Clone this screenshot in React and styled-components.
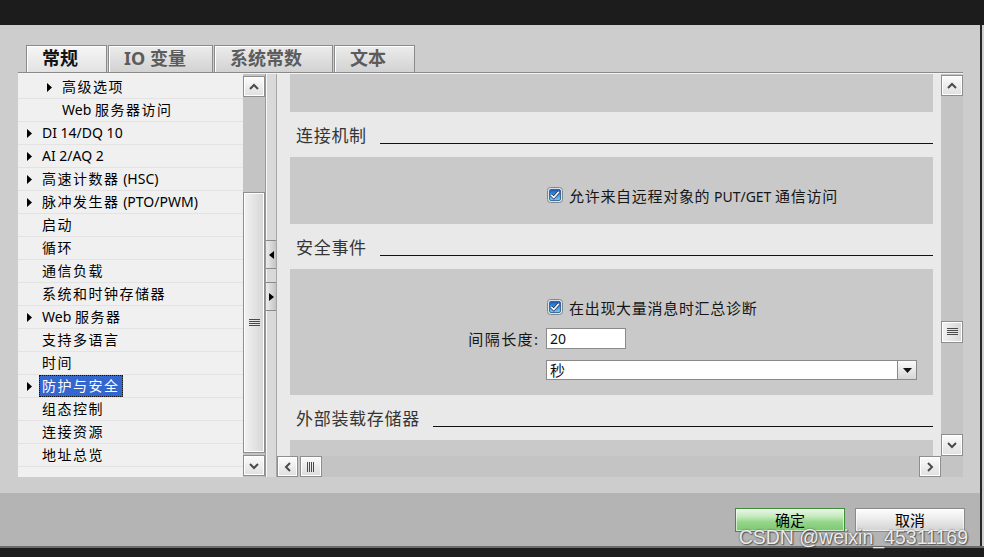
import React from "react";
import styled, { createGlobalStyle } from "styled-components";

const GlobalStyle = createGlobalStyle`
  html, body { margin: 0; padding: 0; background: #1c1c1c; }
  body { font-family: "Noto Sans", "Noto Sans CJK SC", sans-serif; }
  * { box-sizing: border-box; }
`;

const CJK_SPLIT = /([\u2E80-\u9FFF\uFF00-\uFFEF\u3000-\u303F]+)/;
const CJK_TEST = /[\u2E80-\u9FFF\uFF00-\uFFEF\u3000-\u303F]/;

const Lat = styled.span`
  letter-spacing: 0;
  font-size: var(--lat, 1em);
`;

function Txt({ children }) {
  const parts = String(children).split(CJK_SPLIT).filter(Boolean);
  return parts.map((p, i) =>
    CJK_TEST.test(p) ? <React.Fragment key={i}>{p}</React.Fragment> : <Lat key={i}>{p}</Lat>
  );
}

/* ---------- page frame ---------- */
const Page = styled.div`
  width: 984px;
  height: 557px;
  display: grid;
  grid-template-columns: 980px 2px 2px;
  grid-template-rows: 25px 521px 11px;
  overflow: hidden;
`;
const TopBar = styled.div`
  grid-column: 1 / -1;
  background: #1c1c1c;
`;
const Edge = styled.div`
  background: ${(p) => (p.$light ? "#cfcfcf" : "#262626")};
`;
const BottomBar = styled.div`
  grid-column: 1 / -1;
  background: #1c1c1c;
  border-top: 2px solid #6a6a6a;
`;
const Window = styled.div`
  background: #cdcdcd;
  display: flex;
  flex-direction: column;
`;
const Inspector = styled.div`
  padding: 20px 17px 0 18px;
  display: flex;
  flex-direction: column;
`;

/* ---------- tabs ---------- */
const TabStrip = styled.div`
  display: flex;
  height: 28px;
  padding-left: 8px;
  border-bottom: 1px solid #8a8a8a;
`;
const Tab = styled.div`
  width: ${(p) => p.$w}px;
  height: 27px;
  margin-right: 1px;
  padding-left: 15px;
  border: 1px solid #8a8a8a;
  border-bottom: none;
  background: ${(p) =>
    p.$active
      ? "linear-gradient(#f6f6f6, #e2e2e2)"
      : "linear-gradient(#ececec, #d2d2d2)"};
  box-shadow: inset 1px 1px 0 #ffffff;
  font-size: 18px;
  font-weight: 700;
  line-height: 25px;
  color: ${(p) => (p.$active ? "#141414" : "#5c5c5c")};
  white-space: nowrap;
`;

/* ---------- panels ---------- */
const Panels = styled.div`
  display: flex;
  height: 404px;
  border-top: 1px solid #f4f4f4;
`;
const TreeList = styled.div`
  width: 225px;
  background: #f0f0f0;
  padding-top: 2px;
  overflow: hidden;
`;
const Row = styled.div`
  height: 23px;
  border-bottom: 1px solid #e3e3e3;
  display: flex;
  align-items: center;
  padding-left: ${(p) => 9 + p.$level * 20}px;
`;
const ArrowSlot = styled.span`
  width: 15px;
  flex: none;
  display: flex;
  align-items: center;
`;
const RowLabel = styled.span`
  --lat: 14px;
  display: inline-block;
  height: 22px;
  font-size: 14px;
  line-height: 22px;
  letter-spacing: 1.5px;
  white-space: nowrap;
  color: ${(p) => (p.$sel ? "#ffffff" : "#000000")};
  background: ${(p) => (p.$sel ? "#3366cf" : "transparent")};
  outline: ${(p) => (p.$sel ? "1px dotted #101010" : "none")};
  outline-offset: -1px;
  margin-left: ${(p) => (p.$sel ? -3 : 0)}px;
  padding: 0 ${(p) => (p.$sel ? 3 : 0)}px;
`;

/* ---------- scrollbars ---------- */
const VScroll = styled.div`
  width: 22px;
  flex: none;
  background: #c4c4c4;
  display: flex;
  flex-direction: column;
  padding: ${(p) => p.$pt}px 0 ${(p) => p.$pb}px;
`;
const HScroll = styled.div`
  height: 21px;
  background: #c4c4c4;
  display: flex;
`;
const SBtn = styled.div`
  flex: none;
  width: ${(p) => p.$w || 22}px;
  height: ${(p) => p.$h || 21}px;
  border: 1px solid #8e8e8e;
  background: linear-gradient(#fbfbfb, #e0e0e0);
  box-shadow: inset 0 0 0 1px #ffffff;
  display: flex;
  align-items: center;
  justify-content: center;
`;
const Track = styled.div`
  flex: 1;
  display: flex;
  flex-direction: ${(p) => (p.$h ? "row" : "column")};
`;
const Thumb = styled.div`
  flex: none;
  ${(p) =>
    p.$h
      ? `margin-left:${p.$off}px; width:${p.$len}px; height:21px;
         background: linear-gradient(#fafafa, #dcdcdc);`
      : `margin-top:${p.$off}px; height:${p.$len}px; width:22px;
         background: linear-gradient(to right, #f2f2f2, #d6d6d6);`}
  border: 1px solid #8e8e8e;
  box-shadow: inset 0 0 0 1px #ffffff;
  display: flex;
  align-items: center;
  justify-content: center;
`;

/* ---------- splitter ---------- */
const Splitter = styled.div`
  width: 12px;
  flex: none;
  background: #d9d9d9;
  border-left: 1px solid #9a9a9a;
  border-right: 1px solid #a6a6a6;
  box-shadow: inset 1px 0 0 #f7f7f7;
  display: flex;
  flex-direction: column;
  gap: 13px;
  padding-top: 166px;
`;
const SplitBtn = styled.div`
  height: 29px;
  border-top: 1px solid #8a8a8a;
  border-bottom: 1px solid #8a8a8a;
  background: linear-gradient(to right, #ececec, #c4c4c4);
  display: flex;
  align-items: center;
  justify-content: center;
`;

/* ---------- right area ---------- */
const RightArea = styled.div`
  width: 686px;
  display: grid;
  grid-template-columns: 664px 22px;
  grid-template-rows: 382px 21px;
`;
const Viewport = styled.div`
  background: #e9e9e9;
  overflow: hidden;
  padding: 0 8px 0 13px;
  display: flex;
  flex-direction: column;
`;
const GrayBlock = styled.div`
  flex: none;
  height: ${(p) => p.$h}px;
  background: #c9c9c9;
`;
const SectionHead = styled.div`
  flex: none;
  height: 45px;
  display: flex;
  align-items: flex-start;
  padding: 12px 0 0 6px;
`;
const HeadTitle = styled.span`
  font-size: 17px;
  letter-spacing: 0.7px;
  line-height: 24px;
  color: #353535;
  margin-right: 13px;
  white-space: nowrap;
`;
const HeadRule = styled.div`
  flex: 1;
  height: 20px;
  border-bottom: 1px solid #111111;
`;
const FormPanel = styled.div`
  flex: none;
  background: #c9c9c9;
  display: grid;
  grid-template-columns: 248px 1fr;
  column-gap: 8px;
  row-gap: 11px;
  align-items: center;
  padding: ${(p) => p.$pt}px 16px ${(p) => p.$pb}px 0;
`;
const CheckCell = styled.label`
  --lat: 14px;
  grid-column: 2;
  height: 20px;
  display: flex;
  align-items: center;
  gap: 6px;
  padding-left: 1px;
  font-size: 15px;
  letter-spacing: 0.7px;
  color: #161616;
  white-space: nowrap;
`;
const FieldLabel = styled.span`
  --lat: 15px;
  grid-column: 1;
  justify-self: end;
  font-size: 15px;
  letter-spacing: 1.4px;
  color: #161616;
`;
const TextInput = styled.div`
  grid-column: 2;
  width: 80px;
  height: 21px;
  background: #ffffff;
  border: 1px solid #8a8a8a;
  padding-left: 3px;
  font-size: 14px;
  line-height: 19px;
  color: #111;
`;
const Select = styled.div`
  grid-column: 2;
  width: 371px;
  height: 20px;
  background: #ffffff;
  border: 1px solid #8a8a8a;
  display: flex;
`;
const SelectText = styled.span`
  flex: 1;
  padding-left: 3px;
  font-size: 15px;
  line-height: 18px;
  color: #111;
`;
const SelectBtn = styled.span`
  width: 19px;
  border-left: 1px solid #8a8a8a;
  background: linear-gradient(#fafafa, #d6d6d6);
  display: flex;
  align-items: center;
  justify-content: center;
`;

/* ---------- buttons ---------- */
const Gap = styled.div`
  height: 16px;
  flex: none;
`;
const ButtonBar = styled.div`
  position: relative;
  flex: 1;
  background: #b4b4b4;
  display: flex;
  justify-content: flex-end;
  align-items: flex-start;
  gap: 10px;
  padding: 15px 15px 0 0;
`;
const DlgButton = styled.div`
  width: 110px;
  height: 24px;
  border: 1px solid ${(p) => (p.$primary ? "#3f8f3a" : "#8a8a8a")};
  background: ${(p) =>
    p.$primary
      ? "linear-gradient(#eaf7e6 0%, #c4e9bc 35%, #94d58a 60%, #7cc772 100%)"
      : "linear-gradient(#fdfdfd 0%, #ececec 45%, #d2d2d2 100%)"};
  box-shadow: inset 0 0 0 1px rgba(255, 255, 255, 0.6);
  font-size: 15px;
  line-height: 22px;
  text-align: center;
  color: #000;
`;
const Watermark = styled.div`
  position: absolute;
  right: 12px;
  bottom: -2px;
  font-family: "Liberation Sans", Arial, sans-serif;
  font-size: 19.5px;
  line-height: 22px;
  color: rgba(255, 255, 255, 0.88);
  text-shadow: 0 0 2px rgba(60, 60, 60, 0.8), 1px 1px 1px rgba(40, 40, 40, 0.6);
  white-space: nowrap;
  pointer-events: none;
`;

/* ---------- icons ---------- */
const Chevron = ({ dir }) => {
  const pts = {
    up: "1,7 5,3 9,7",
    down: "1,3 5,7 9,3",
    left: "7,1 3,5 7,9",
    right: "3,1 7,5 3,9",
  }[dir];
  return (
    <svg width="10" height="10" viewBox="0 0 10 10">
      <polyline points={pts} fill="none" stroke="#4a4a4a" strokeWidth="2" />
    </svg>
  );
};
const TreeArrow = () => (
  <svg width="5" height="9" viewBox="0 0 5 9">
    <polygon points="0,0 5,4.5 0,9" fill="#000" />
  </svg>
);
const SmallTri = ({ dir }) => (
  <svg width="5" height="8" viewBox="0 0 5 8">
    <polygon points={dir === "left" ? "5,0 0,4 5,8" : "0,0 5,4 0,8"} fill="#000" />
  </svg>
);
const DownTri = () => (
  <svg width="9" height="5" viewBox="0 0 9 5">
    <polygon points="0,0 9,0 4.5,5" fill="#111" />
  </svg>
);
const GripH = () => (
  <svg width="11" height="8" viewBox="0 0 11 8">
    {[0.5, 2.5, 4.5, 6.5].map((y) => (
      <line key={y} x1="0" x2="11" y1={y} y2={y} stroke="#4a4a4a" strokeWidth="1" />
    ))}
  </svg>
);
const GripV = () => (
  <svg width="8" height="10" viewBox="0 0 8 10">
    {[0.5, 2.5, 4.5, 6.5].map((x) => (
      <line key={x} y1="0" y2="10" x1={x} x2={x} stroke="#4a4a4a" strokeWidth="1" />
    ))}
  </svg>
);
const CheckBox = () => (
  <svg width="16" height="16" viewBox="0 0 16 16" style={{ flex: "none" }}>
    <defs>
      <linearGradient id="cbfill" x1="0" y1="0" x2="0" y2="1">
        <stop offset="0" stopColor="#1d57b8" />
        <stop offset="1" stopColor="#6fd3f5" />
      </linearGradient>
    </defs>
    <rect x="0.5" y="0.5" width="15" height="15" rx="3" fill="#dfe3e8" stroke="#7b8794" />
    <rect x="2.5" y="2.5" width="11" height="11" rx="1.5" fill="url(#cbfill)" stroke="#2f4f7f" strokeWidth="0.8" />
    <polyline points="4.2,8 6.8,10.6 11.8,4.8" fill="none" stroke="#1a2c5a" strokeWidth="3" />
    <polyline points="4.2,8 6.8,10.6 11.8,4.8" fill="none" stroke="#ffffff" strokeWidth="1.7" />
  </svg>
);

/* ---------- data ---------- */
const tree = [
  { l: 1, a: true, t: "高级选项" },
  { l: 1, t: "Web 服务器访问" },
  { l: 0, a: true, t: "DI 14/DQ 10" },
  { l: 0, a: true, t: "AI 2/AQ 2" },
  { l: 0, a: true, t: "高速计数器 (HSC)" },
  { l: 0, a: true, t: "脉冲发生器 (PTO/PWM)" },
  { l: 0, t: "启动" },
  { l: 0, t: "循环" },
  { l: 0, t: "通信负载" },
  { l: 0, t: "系统和时钟存储器" },
  { l: 0, a: true, t: "Web 服务器" },
  { l: 0, t: "支持多语言" },
  { l: 0, t: "时间" },
  { l: 0, a: true, s: true, t: "防护与安全" },
  { l: 0, t: "组态控制" },
  { l: 0, t: "连接资源" },
  { l: 0, t: "地址总览" },
];

const tabs = [
  { t: "常规", w: 81, active: true },
  { t: "IO 变量", w: 105 },
  { t: "系统常数", w: 119 },
  { t: "文本", w: 81 },
];

function Section({ title }) {
  return (
    <SectionHead>
      <HeadTitle>{title}</HeadTitle>
      <HeadRule />
    </SectionHead>
  );
}

export default function App() {
  return (
    <>
      <GlobalStyle />
      <Page>
        <TopBar />
        <Window>
          <Inspector>
            <TabStrip>
              {tabs.map((tb) => (
                <Tab key={tb.t} $w={tb.w} $active={tb.active}>
                  {tb.t}
                </Tab>
              ))}
            </TabStrip>
            <Panels>
              <TreeList>
                {tree.map((r) => (
                  <Row key={r.t} $level={r.l}>
                    <ArrowSlot>{r.a && <TreeArrow />}</ArrowSlot>
                    <RowLabel $sel={r.s}>
                      <Txt>{r.t}</Txt>
                    </RowLabel>
                  </Row>
                ))}
              </TreeList>
              <VScroll $pt={2} $pb={1}>
                <SBtn>
                  <Chevron dir="up" />
                </SBtn>
                <Track>
                  <Thumb $off={95} $len={261}>
                    <GripH />
                  </Thumb>
                </Track>
                <SBtn>
                  <Chevron dir="down" />
                </SBtn>
              </VScroll>
              <Splitter>
                <SplitBtn>
                  <SmallTri dir="left" />
                </SplitBtn>
                <SplitBtn>
                  <SmallTri dir="right" />
                </SplitBtn>
              </Splitter>
              <RightArea>
                <Viewport>
                  <GrayBlock $h={38} />
                  <Section title="连接机制" />
                  <FormPanel $pt={28} $pb={19}>
                    <CheckCell>
                      <CheckBox />
                      <span>
                        <Txt>允许来自远程对象的 PUT/GET 通信访问</Txt>
                      </span>
                    </CheckCell>
                  </FormPanel>
                  <Section title="安全事件" />
                  <FormPanel $pt={28} $pb={15}>
                    <CheckCell>
                      <CheckBox />
                      <span>在出现大量消息时汇总诊断</span>
                    </CheckCell>
                    <FieldLabel>
                      <Txt>间隔长度:</Txt>
                    </FieldLabel>
                    <TextInput>20</TextInput>
                    <Select>
                      <SelectText>秒</SelectText>
                      <SelectBtn>
                        <DownTri />
                      </SelectBtn>
                    </Select>
                  </FormPanel>
                  <Section title="外部装载存储器" />
                  <GrayBlock $h={80} />
                </Viewport>
                <VScroll $pt={1} $pb={0}>
                  <SBtn>
                    <Chevron dir="up" />
                  </SBtn>
                  <Track>
                    <Thumb $off={225} $len={22}>
                      <GripH />
                    </Thumb>
                  </Track>
                  <SBtn $h={22}>
                    <Chevron dir="down" />
                  </SBtn>
                </VScroll>
                <HScroll>
                  <SBtn $w={21}>
                    <Chevron dir="left" />
                  </SBtn>
                  <Track $h>
                    <Thumb $h $off={2} $len={22}>
                      <GripV />
                    </Thumb>
                  </Track>
                  <SBtn $w={22}>
                    <Chevron dir="right" />
                  </SBtn>
                </HScroll>
                <HScroll />
              </RightArea>
            </Panels>
          </Inspector>
          <Gap />
          <ButtonBar>
            <DlgButton $primary>确定</DlgButton>
            <DlgButton>取消</DlgButton>
            <Watermark>CSDN @weixin_45311169</Watermark>
          </ButtonBar>
        </Window>
        <Edge />
        <Edge $light />
        <BottomBar />
      </Page>
    </>
  );
}
